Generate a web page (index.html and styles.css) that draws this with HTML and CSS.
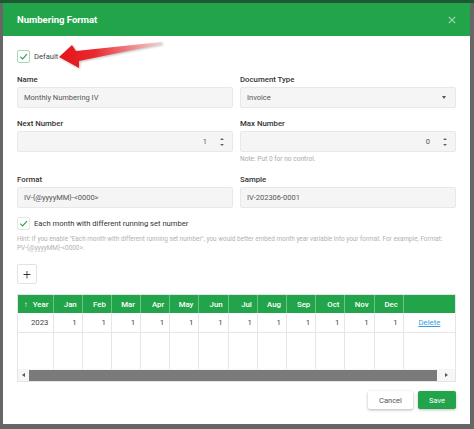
FILE: index.html
```html
<!DOCTYPE html>
<html>
  <head>
    <meta charset="utf-8">
    <title>Numbering Format</title>
    <link rel="stylesheet" href="styles.css">
  </head>
  <body>
    <div class="page-bar"></div>
    <div class="dialog">
      <div class="dialog-header">
        <h1>Numbering Format</h1>
        <svg class="close" viewBox="0 0 10 10"><path d="M1 1L9 9M9 1L1 9" /></svg>
      </div>

      <div class="dialog-body">
        <label class="check">
          <span class="box"><svg viewBox="0 0 12 12"><path d="M2.5 6.2L5 8.6L9.8 3.4" /></svg></span>
          Default
        </label>

        <div class="form-grid">
          <div class="field">
            <label>Name</label>
            <div class="input">Monthly Numbering IV</div>
          </div>
          <div class="field">
            <label>Document Type</label>
            <div class="input select">Invoice<span class="caret"></span></div>
          </div>
          <div class="field">
            <label>Next Number</label>
            <div class="input number">1<span class="spin"><i class="up"></i><i class="down"></i></span></div>
          </div>
          <div class="field">
            <label>Max Number</label>
            <div class="input number">0<span class="spin"><i class="up"></i><i class="down"></i></span></div>
            <p class="note">Note: Put 0 for no control.</p>
          </div>
          <div class="field">
            <label>Format</label>
            <div class="input">IV-{@yyyyMM}-&lt;0000&gt;</div>
          </div>
          <div class="field">
            <label>Sample</label>
            <div class="input">IV-202306-0001</div>
          </div>
        </div>

        <label class="check running">
          <span class="box"><svg viewBox="0 0 12 12"><path d="M2.5 6.2L5 8.6L9.8 3.4" /></svg></span>
          Each month with different running set number
        </label>
        <p class="hint">Hint: If you enable "Each month with different running set number", you would better embed month year variable into your format. For example, Format: <span class="code">PV-{@yyyyMM}-&lt;0000&gt;.</span></p>

        <button class="add-btn">+</button>

        <div class="table-wrap">
          <table class="months">
            <thead>
              <tr>
                <th class="year"><span class="sort">&#8593;</span>Year</th>
                <th class="month">Jan</th>
                <th class="month">Feb</th>
                <th class="month">Mar</th>
                <th class="month">Apr</th>
                <th class="month">May</th>
                <th class="month">Jun</th>
                <th class="month">Jul</th>
                <th class="month">Aug</th>
                <th class="month">Sep</th>
                <th class="month">Oct</th>
                <th class="month">Nov</th>
                <th class="month">Dec</th>
                <th class="action"></th>
              </tr>
            </thead>
            <tbody>
              <tr class="data">
                <td>2023</td>
                <td>1</td><td>1</td><td>1</td><td>1</td><td>1</td><td>1</td>
                <td>1</td><td>1</td><td>1</td><td>1</td><td>1</td><td>1</td>
                <td class="action"><a href="#">Delete</a></td>
              </tr>
              <tr class="filler">
                <td></td><td></td><td></td><td></td><td></td><td></td><td></td>
                <td></td><td></td><td></td><td></td><td></td><td></td><td></td>
              </tr>
            </tbody>
          </table>
          <div class="hscroll">
            <span class="scroll-arrow left"></span>
            <span class="thumb"></span>
            <span class="scroll-arrow right"></span>
          </div>
        </div>

        <div class="dialog-footer">
          <button class="btn cancel">Cancel</button>
          <button class="btn save">Save</button>
        </div>
      </div>

      <!-- annotation arrow pointing at the Default checkbox -->
      <svg class="pointer" viewBox="0 0 200 80">
        <defs>
          <linearGradient id="arrow-fade" x1="0" y1="0" x2="1" y2="0">
            <stop offset="0" stop-color="#e3141b" />
            <stop offset="0.35" stop-color="#e82a2f" />
            <stop offset="1" stop-color="#f6d3d3" />
          </linearGradient>
        </defs>
        <polygon points="59,57 72,45 76,51 162,42 162,44 79,61 79,68" fill="url(#arrow-fade)" />
      </svg>
    </div>
  </body>
</html>
```

FILE: styles.css
```css
* {
    box-sizing: border-box;
}

html, body {
    margin: 0;
    padding: 0;
}

body {
    width: 474px;
    height: 429px;
    overflow: hidden;
    background-color: #666;
    font-family: Roboto, "Liberation Sans", sans-serif;
    color: #333;
}

.page-bar {
    height: 3px;
    background-color: #1c5834;
}

.dialog {
    position: relative;
    width: 467px;
    height: 421px;
    margin-left: 3px;
    background-color: #fff;
}

.dialog-header {
    height: 33px;
    padding: 0 14px;
    display: flex;
    align-items: center;
    justify-content: space-between;
    background-color: #22a44b;
}

.dialog-header h1 {
    margin: 0;
    font-size: 9.5px;
    font-weight: 700;
    color: #fff;
}

.close {
    width: 8px;
    height: 8px;
    margin-right: 0;
}

.close path {
    stroke: rgba(255, 255, 255, 0.6);
    stroke-width: 1.3;
    fill: none;
}

.dialog-body {
    padding: 14px 14px 0;
}

/* Checkboxes */
.check {
    display: flex;
    align-items: center;
    gap: 4px;
    height: 13px;
    font-size: 7.6px;
    color: #444;
}

.check .box {
    width: 13px;
    height: 13px;
    border: 1px solid #a9d9b4;
    border-radius: 2px;
    display: flex;
    align-items: center;
    justify-content: center;
}

.check .box svg {
    width: 11px;
    height: 11px;
}

.check .box path {
    fill: none;
    stroke: #2ea44f;
    stroke-width: 1.3;
}

.check.running {
    margin-top: 9px;
    font-size: 7.6px;
    color: #333;
}

.check.running .box {
    border-color: #e6e6e6;
}

/* Form */
.form-grid {
    display: grid;
    grid-template-columns: 1fr 1fr;
    column-gap: 7px;
    row-gap: 10px;
    margin-top: 11px;
}

.field label {
    display: block;
    font-size: 7.8px;
    font-weight: 500;
    line-height: 11px;
    margin-bottom: 2px;
    color: #333;
}

.input {
    height: 21px;
    padding: 0 6px;
    display: flex;
    align-items: center;
    background-color: #f5f5f5;
    border: 1px solid #e8e8e8;
    border-radius: 2px;
    font-size: 7.5px;
    color: #555;
}

.input.select {
    justify-content: space-between;
}

.caret {
    width: 0;
    height: 0;
    margin-right: 3px;
    border-left: 2.5px solid transparent;
    border-right: 2.5px solid transparent;
    border-top: 3px solid #555;
}

.input.number {
    justify-content: flex-end;
    padding-right: 8px;
}

.spin {
    display: flex;
    flex-direction: column;
    gap: 4px;
    margin-left: 13px;
}

.spin i {
    width: 0;
    height: 0;
    border-left: 2px solid transparent;
    border-right: 2px solid transparent;
}

.spin .up {
    border-bottom: 2.5px solid #666;
}

.spin .down {
    border-top: 2.5px solid #666;
}

.note {
    margin: 3px 0 0;
    font-size: 6.6px;
    line-height: 9px;
    color: #aaa;
}

.hint {
    margin: 5px 0 0;
    font-size: 6.4px;
    line-height: 9px;
    color: #b2b2b2;
}

.hint .code {
    white-space: nowrap;
}

.add-btn {
    display: block;
    width: 20px;
    height: 20px;
    margin-top: 11px;
    padding: 0;
    background-color: #fff;
    border: 1px solid #e2e2e2;
    border-radius: 2px;
    font-family: inherit;
    font-size: 14px;
    font-weight: 300;
    line-height: 16px;
    color: #333;
}

/* Year table */
.table-wrap {
    margin-top: 10px;
    border: 1px solid #e4e4e4;
}

.months {
    width: 100%;
    border-collapse: collapse;
    table-layout: fixed;
    font-size: 7.8px;
}

.months th {
    height: 18px;
    padding: 0 5px 0 0;
    text-align: right;
    font-weight: 500;
    color: #fff;
    background-color: #22a44b;
    border-right: 1px solid rgba(255, 255, 255, 0.35);
}

.months th.year {
    width: 35px;
    padding-right: 4px;
}

.months th.month {
    width: 29.2px;
}

.months th:last-child {
    border-right: none;
}

.sort {
    float: left;
    margin-left: 6px;
}

.months td {
    padding: 0 5px 0 0;
    text-align: right;
    color: #444;
    border-right: 1px solid #e6e6e6;
}

.months td:last-child {
    border-right: none;
}

.months tr.data td {
    height: 19px;
    border-bottom: 1px solid #e6e6e6;
}

.months tr.data td:first-child {
    padding-right: 4px;
}

.months tr.filler td {
    height: 37px;
}

.months td.action {
    text-align: center;
    padding: 0;
}

.months td.action a {
    color: #3a9be0;
}

.hscroll {
    height: 12px;
    display: flex;
    align-items: center;
    background-color: #f6f6f6;
}

.scroll-arrow {
    display: flex;
    align-items: center;
    justify-content: center;
    height: 12px;
}

.scroll-arrow.left {
    width: 11px;
}

.scroll-arrow.right {
    width: 18px;
}

.scroll-arrow::before {
    content: "";
    width: 0;
    height: 0;
    border-top: 2.5px solid transparent;
    border-bottom: 2.5px solid transparent;
}

.scroll-arrow.left::before {
    border-right: 3px solid #555;
}

.scroll-arrow.right::before {
    border-left: 3px solid #555;
}

.thumb {
    flex: 1;
    height: 11px;
    background-color: #7a7a7a;
}

/* Footer */
.dialog-footer {
    display: flex;
    justify-content: flex-end;
    gap: 5px;
    margin-top: 9px;
}

.btn {
    height: 18px;
    padding: 0;
    border: none;
    border-radius: 2px;
    font-family: inherit;
    font-size: 7.5px;
}

.btn.cancel {
    width: 45px;
    background-color: #fff;
    color: #555;
    box-shadow: 0 1px 3px rgba(0, 0, 0, 0.3);
}

.btn.save {
    width: 38px;
    background-color: #22a44b;
    color: #fff;
    box-shadow: 0 1px 3px rgba(0, 0, 0, 0.25);
}

/* Annotation arrow over the dialog */
.pointer {
    position: absolute;
    left: -3px;
    top: -3px;
    width: 200px;
    height: 80px;
    filter: drop-shadow(1px 1px 1px rgba(0, 0, 0, 0.25));
}
```
